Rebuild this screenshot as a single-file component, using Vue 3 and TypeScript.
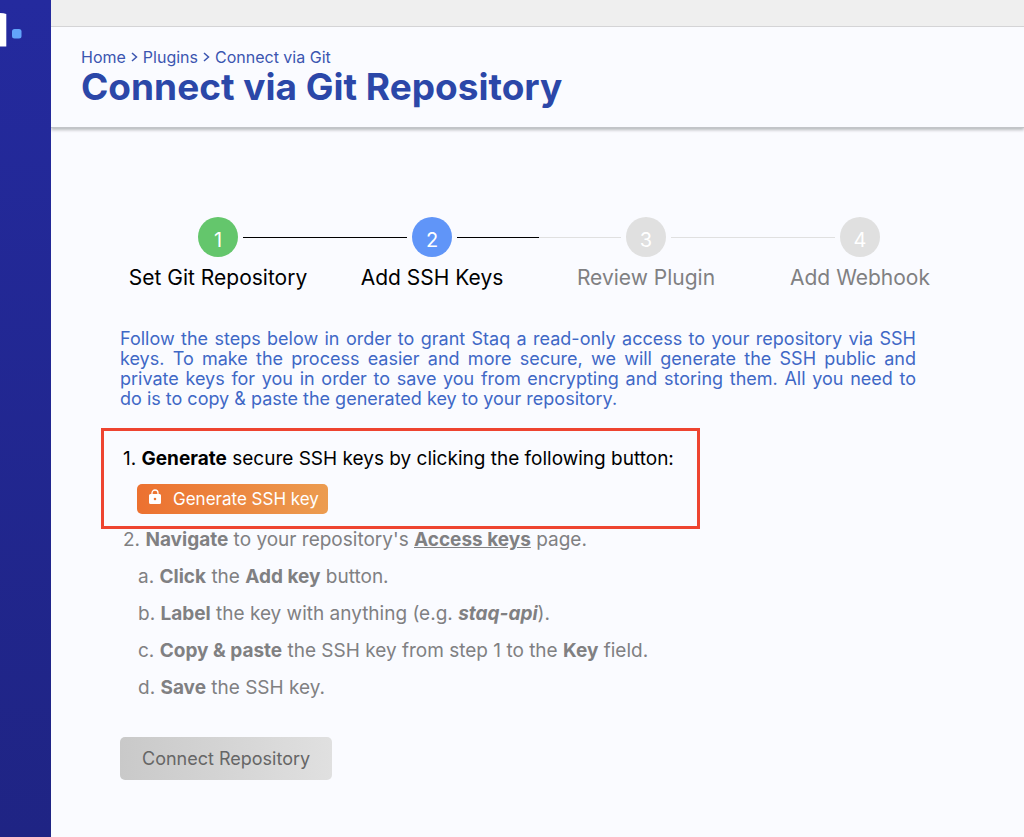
<script setup lang="ts">
interface Step {
  label: string
  state: 'done' | 'current' | 'todo'
}

const steps: Step[] = [
  { label: 'Set Git Repository', state: 'done' },
  { label: 'Add SSH Keys', state: 'current' },
  { label: 'Review Plugin', state: 'todo' },
  { label: 'Add Webhook', state: 'todo' },
]
</script>

<template>
  <div class="app">
    <aside class="sidebar">
      <svg class="logo" width="24" height="48" viewBox="0 0 24 48" aria-hidden="true">
        <path d="M0 13Q4 13 6.300 14V46.500H0Z" fill="#fff" />
        <rect x="12" y="29" width="9.500" height="9.500" rx="2.500" fill="#62a4fb" />
      </svg>
    </aside>

    <div class="page">
      <div class="topbar"></div>
      <header class="header">
        <nav class="crumbs" aria-label="Breadcrumb">
          <a href="#">Home</a>
          <svg width="7" height="10" viewBox="0 0 7 10"><path d="M1 1l4.500 4-4.500 4" /></svg>
          <a href="#">Plugins</a>
          <svg width="7" height="10" viewBox="0 0 7 10"><path d="M1 1l4.500 4-4.500 4" /></svg>
          <a href="#">Connect via Git</a>
        </nav>
        <h1>Connect via Git Repository</h1>
      </header>

      <main>
        <ol class="stepper">
          <li v-for="(step, i) in steps" :key="step.label" :class="step.state">
            <div class="track">
              <span class="line before"></span>
              <span class="circle">{{ i + 1 }}</span>
              <span class="line after"></span>
            </div>
            <span class="label">{{ step.label }}</span>
          </li>
        </ol>

        <div class="content">
          <p class="intro">
            Follow the steps below in order to grant Staq a read-only access to your repository via SSH
            keys. To make the process easier and more secure, we will generate the SSH public and
            private keys for you in order to save you from encrypting and storing them. All you need to
            do&nbsp;is to copy &amp; paste the generated key to your repository.
          </p>

          <section class="highlight">
            <p>1. <b>Generate</b> secure SSH keys by clicking the following button:</p>
            <button type="button" class="generate">
              <svg width="12" height="20" viewBox="0 0 12 20" aria-hidden="true">
                <path d="M3 6V4a3 3 0 0 1 6 0v2" fill="none" stroke="#fff" stroke-width="1.300" />
                <path fill="#fff" fill-rule="evenodd" d="M1.500 5h9A1.500 1.500 0 0 1 12 6.500V13.500a1.500 1.500 0 0 1-1.500 1.500h-9A1.500 1.500 0 0 1 0 13.500V6.500A1.500 1.500 0 0 1 1.500 5ZM6 8.700a1.300 1.300 0 1 0 0 2.600 1.300 1.300 0 0 0 0-2.600Z" />
              </svg>
              Generate SSH key
            </button>
          </section>

          <section class="pending">
            <p>2. <b>Navigate</b> to your repository's <a href="#">Access keys</a> page.</p>
            <ul>
              <li>a. <b>Click</b> the <b>Add key</b> button.</li>
              <li>b. <b>Label</b> the key with anything (e.g. <b><i>staq-api</i></b>).</li>
              <li>c. <b>Copy &amp; paste</b> the SSH key from step 1 to the <b>Key</b> field.</li>
              <li>d. <b>Save</b> the SSH key.</li>
            </ul>
          </section>

          <button type="button" class="connect">Connect Repository</button>
        </div>
      </main>
    </div>
  </div>
</template>

<style>
body {
  margin: 0;
  background: #fafbff;
}
</style>

<style scoped>
.app {
  display: flex;
  min-height: 100vh;
  font-family: Inter, "Open Sans", sans-serif;
  font-size: 19px;
  line-height: 20px;
  color: #000;
}
p, ul, ol, h1 {
  margin: 0;
  padding: 0;
}
ul, ol {
  list-style: none;
}
button {
  border: 0;
  font-family: inherit;
}
.sidebar {
  position: relative;
  z-index: 1;
  flex: 0 0 51px;
  background: linear-gradient(#242a9e, #1f2484);
}
.logo {
  display: block;
}
.page {
  flex: 1;
  min-width: 0;
}
.topbar {
  height: 26px;
  background: #efefef;
  border-bottom: 1px solid #d5d5d7;
}
.header {
  padding: 20px 30px;
  border-bottom: 1px solid #c2c4c8;
  box-shadow: 0 2px 3px #b8babe;
  color: #2b47a8;
}
.crumbs {
  display: flex;
  align-items: center;
  gap: 5px;
  font-size: 16px;
}
.crumbs a {
  color: #3b55b0;
  text-decoration: none;
}
.crumbs path {
  fill: none;
  stroke: #3b55b0;
  stroke-width: 1.5;
}
h1 {
  font-size: 37px;
  line-height: 40px;
  font-weight: 700;
}
.stepper {
  display: grid;
  grid-template-columns: repeat(4, 1fr);
  margin: 89px 57px 0 60px;
  text-align: center;
}
.track {
  display: flex;
  align-items: center;
  gap: 5px;
}
.line {
  flex: 1;
  height: 1px;
  background: #e0e0e0;
}
.done .after,
.current .line {
  background: #000;
}
.stepper li:first-child .before,
.stepper li:last-child .after {
  visibility: hidden;
}
.circle {
  width: 40px;
  height: 40px;
  padding-top: 6px;
  box-sizing: border-box;
  border-radius: 50%;
  background: #e0e0e0;
  color: #fff;
  font-size: 20px;
  line-height: 34px;
}
.done .circle {
  background: #64c66c;
}
.current .circle {
  background: #6095f8;
}
.label {
  display: block;
  margin-top: 9px;
  font-size: 21px;
  line-height: 24px;
}
.todo .label {
  color: #808082;
}
.content {
  margin: 39px 108px 0 69px;
}
.intro {
  color: #3f68c6;
  font-size: 18px;
  text-align: justify;
}
.highlight {
  width: fit-content;
  box-sizing: border-box;
  margin: 19px 0 0 -19px;
  padding: 18px 23px 12px 19px;
  border: 3px solid #ee4430;
}
.generate {
  display: flex;
  align-items: center;
  gap: 12px;
  height: 30px;
  margin: 15px 0 0 14px;
  padding: 0 9px 0 12px;
  border-radius: 5px;
  background: linear-gradient(90deg, #ec7130, #ec9c50);
  color: #fff;
  font-size: 17px;
}
.pending {
  padding: 1px 0 0 3px;
  color: #808082;
}
.pending a {
  color: inherit;
  font-weight: 700;
}
.pending ul {
  padding-left: 15px;
}
.pending li {
  margin-top: 17px;
}
.connect {
  margin-top: 39px;
  padding: 12px 22px 11px;
  border-radius: 5px;
  background: linear-gradient(90deg, #c9c9c9, #e0e0e0);
  color: #666;
  font-size: 18px;
  line-height: 20px;
}
</style>
